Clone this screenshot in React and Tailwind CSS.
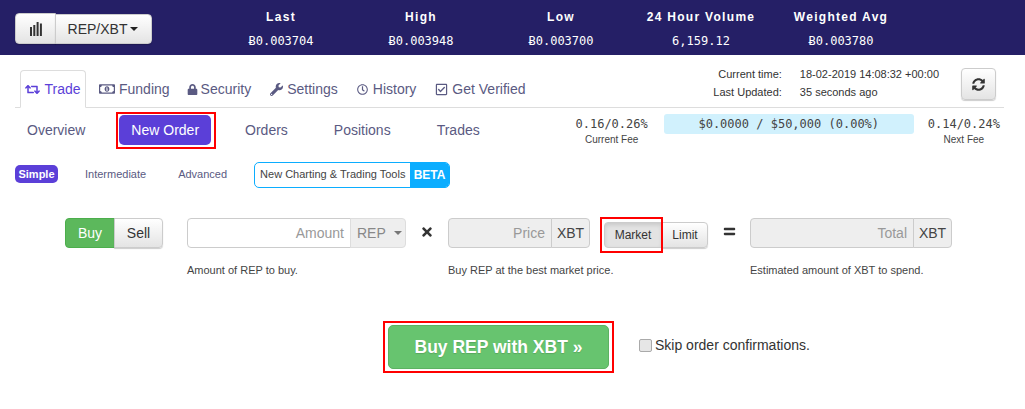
import React from "react";
import { FaRetweet, FaRegMoneyBillAlt, FaLock, FaWrench, FaRegClock, FaRegCheckSquare, FaSyncAlt, FaTimes, FaEquals } from "react-icons/fa";

const sans = "font-['Liberation_Sans',Arial,sans-serif]";
const mono = "font-['DejaVu_Sans_Mono',monospace]";
const btn = "bg-gradient-to-b from-white to-[#e4e4e4] border border-[#ccc] shadow-[0_1px_1px_rgba(0,0,0,0.2)]";

const stats = [
  ["Last", "Ƀ0.003704"],
  ["High", "Ƀ0.003948"],
  ["Low", "Ƀ0.003700"],
  ["24 Hour Volume", "6,159.12"],
  ["Weighted Avg", "Ƀ0.003780"],
];

const tabs = [
  [FaRegMoneyBillAlt, "Funding", "text-[16px]", "mr-[4px]", "ml-0"],
  [FaLock, "Security", "text-[11px]", "mr-[3px]", "ml-[17px]"],
  [FaWrench, "Settings", "text-[13px]", "mr-[4px]", "ml-[19px]"],
  [FaRegClock, "History", "text-[11px]", "mr-[5px]", "ml-[19px]"],
  [FaRegCheckSquare, "Get Verified", "text-[13px]", "mr-[4px]", "ml-[19px]"],
];

function RedBox({ className }) {
  return <span className={"absolute border-2 border-[#f00] pointer-events-none " + className} />;
}

function Caret({ color }) {
  return <span className={"inline-block w-0 h-0 border-x-[4px] border-x-transparent border-t-[4px] " + color} />;
}

export default function App() {
  return (
    <div className={sans + " w-[1025px] h-[409px] bg-white text-[#333] overflow-hidden"}>
      <header className="h-[55px] bg-[#251f66] flex items-center pl-[15px]">
        <div className="flex h-[31px] w-[137px] mt-[2px] text-[#333]">
          <div className={btn + " w-[41px] rounded-l-[4px] flex items-center justify-center"}>
            <svg width="12" height="14" viewBox="0 0 12 14" fill="#333">
              <rect x="0" y="5" width="2" height="9" />
              <rect x="3.3" y="3" width="2" height="11" />
              <rect x="6.6" y="0" width="2" height="14" />
              <rect x="9.9" y="1.5" width="2" height="12.5" />
            </svg>
          </div>
          <div className={btn + " flex-1 -ml-px rounded-r-[4px] flex items-center justify-center gap-[3px] text-[14px] mt-px pr-[1px]"}>
            REP/XBT <Caret color="border-t-[#222]" />
          </div>
        </div>
        <div className="ml-[59px] mt-[3px] flex">
          {stats.map(([k, v]) => (
            <div key={k} className="w-[140px] text-center text-white">
              <div className="text-[12px] leading-[14px] font-bold tracking-[1.3px]">{k}</div>
              <div className={mono + " text-[12px] leading-[14px] mt-[10px]"}>{v}</div>
            </div>
          ))}
        </div>
      </header>

      <div className="mx-[15px] w-[989px] h-[53px] border-b border-[#ddd] flex items-end relative text-[14px] text-[#5a5a82]">
        <div className="flex items-end pl-[5px] -mb-px">
          <div className="h-[38px] w-[66px] border border-b-white border-[#ddd] rounded-t-[4px] flex items-center justify-center gap-[4px] text-[#5b3fd8] bg-white">
            <FaRetweet className="text-[15px]" /> Trade
          </div>
          <div className="flex h-[38px] items-center ml-[13px]">
            {tabs.map(([I, t, s, m, l]) => (
              <div key={t} className={"flex items-center whitespace-nowrap " + l}>
                <I className={s + " " + m} />
                {t}
              </div>
            ))}
          </div>
        </div>
        <div className="ml-auto mr-[8px] self-start flex mt-[13px]">
          <div className="text-[11px] leading-[18px] text-[#333] flex gap-[18px] -mt-[3px]">
            <div className="text-right">
              <div>Current time:</div>
              <div>Last Updated:</div>
            </div>
            <div>
              <div>18-02-2019 14:08:32 +00:00</div>
              <div>35 seconds ago</div>
            </div>
          </div>
          <div className={btn + " ml-[22px] w-[35px] h-[32px] rounded-[4px] flex items-center justify-center text-[#333]"}>
            <FaSyncAlt className="text-[13px]" />
          </div>
        </div>
      </div>

      <div className="h-[57px] pl-[15px] flex text-[14px] text-[#5a5a82]">
        <nav className="flex gap-[22px] pt-[7px] items-start">
          <div className="px-3 h-[30px] leading-[30px]">Overview</div>
          <div className="relative px-3 h-[30px] leading-[30px] rounded-[5px] bg-[#5b3fd8] text-white">
            New Order
            <RedBox className="-left-[3px] -right-[5px] -top-[3px] -bottom-[4px]" />
          </div>
          <div className="px-3 h-[30px] leading-[30px]">Orders</div>
          <div className="px-3 h-[30px] leading-[30px]">Positions</div>
          <div className="px-3 h-[30px] leading-[30px]">Trades</div>
        </nav>
        <div className="ml-auto mr-[25px] flex pt-[6px] items-start text-[#444]">
          <div className="text-center">
            <div className={mono + " text-[12px] leading-[20px]"}>0.16/0.26%</div>
            <div className="text-[10px] leading-[12px]">Current Fee</div>
          </div>
          <div className={mono + " ml-[16px] w-[250px] h-[20px] bg-[#d1f1fd] rounded-[3px] text-center text-[12px] leading-[20px]"}>
            $0.0000 / $50,000 (0.00%)
          </div>
          <div className="text-center ml-[14px]">
            <div className={mono + " text-[12px] leading-[20px]"}>0.14/0.24%</div>
            <div className="text-[10px] leading-[12px]">Next Fee</div>
          </div>
        </div>
      </div>

      <div className="h-[26px] mt-[-1px] pl-[15px] flex items-center text-[11px] text-[#5a5a82]">
        <div className="h-[18px] w-[43px] -mt-[6px] rounded-[5px] bg-[#5b3fd8] text-white font-bold text-center leading-[18px]">Simple</div>
        <div className="ml-[27px] -mt-[6px]">Intermediate</div>
        <div className="ml-[32px] -mt-[6px]">Advanced</div>
        <div className="ml-[27px] -mt-[4px] h-[26px] w-[196px] border border-[#0badff] rounded-[5px] flex items-stretch overflow-hidden text-[#444]">
          <span className="pl-[5px] leading-[22px] whitespace-nowrap flex-1">New Charting &amp; Trading Tools</span>
          <span className="w-[39px] bg-[#0badff] text-white font-bold text-[12px] leading-[24px] text-center">BETA</span>
        </div>
      </div>

      <div className="mt-[28px] pl-[65px] flex items-start text-[14px]">
        <div className="w-[122px] flex h-[30px]">
          <div className="w-[50px] rounded-l-[4px] bg-[#5cb85c] border border-[#4cae4c] text-white text-center leading-[28px]">Buy</div>
          <div className={btn + " w-[49px] -ml-px rounded-r-[4px] text-center leading-[28px]"}>Sell</div>
        </div>

        <div className="w-[219px]">
          <div className="flex h-[30px]">
            <div className="w-[164px] border border-[#ccc] rounded-l-[4px] text-right pr-[6px] leading-[28px] text-[#999] bg-white">Amount</div>
            <div className="flex-1 -ml-px border border-[#ddd] rounded-r-[4px] bg-[#eee] text-[#888] flex items-center pl-[6px] gap-[8px]">
              REP <Caret color="border-t-[#777]" />
            </div>
          </div>
          <div className="mt-[14px] text-[11px] leading-[16px] text-[#444] whitespace-nowrap">Amount of REP to buy.</div>
        </div>

        <div className="w-[42px] h-[30px] flex items-center justify-center">
          <FaTimes className="text-[14px] text-[#333] -mt-[2px]" />
        </div>

        <div className="w-[142px] flex-none">
          <div className="flex h-[30px]">
            <div className="flex-1 border border-[#ccc] rounded-l-[4px] text-right pr-[6px] leading-[28px] text-[#999] bg-[#eee]">Price</div>
            <div className="w-[39px] -ml-px border border-[#ccc] rounded-r-[4px] bg-[#eee] text-[#444] text-center leading-[28px]">XBT</div>
          </div>
          <div className="mt-[14px] text-[11px] leading-[16px] text-[#444] whitespace-nowrap">Buy REP at the best market price.</div>
        </div>

        <div className="ml-[14px] w-[104px] h-[26px] mt-[4px] flex text-[12px]">
          <div className="relative w-[59px] rounded-l-[4px] bg-[#e3e3e3] border border-[#ccc] shadow-[inset_0_2px_4px_rgba(0,0,0,0.12)] text-center leading-[24px] pr-[1px]">
            Market
            <RedBox className="-left-[5px] -right-[1px] -top-[6px] -bottom-[6px]" />
          </div>
          <div className={btn + " flex-1 -ml-px rounded-r-[4px] text-center leading-[24px]"}>Limit</div>
        </div>

        <div className="w-[42px] h-[30px] flex items-center justify-center">
          <FaEquals className="text-[13px] text-[#333] -mt-[4px]" />
        </div>

        <div className="w-[202px] flex-none">
          <div className="flex h-[30px]">
            <div className="flex-1 border border-[#ccc] rounded-l-[4px] text-right pr-[6px] leading-[28px] text-[#999] bg-[#eee]">Total</div>
            <div className="w-[39px] -ml-px border border-[#ccc] rounded-r-[4px] bg-[#eee] text-[#444] text-center leading-[28px]">XBT</div>
          </div>
          <div className="mt-[14px] text-[11px] leading-[16px] text-[#444] whitespace-nowrap">Estimated amount of XBT to spend.</div>
        </div>
      </div>

      <div className="mt-[47px] pl-[388px] flex items-start">
        <div className="relative w-[221px] h-[44px] rounded-[5px] bg-[#67c46f] border border-[#5cb262] text-white font-bold text-[17.5px] text-center leading-[42px] [text-shadow:0_1px_1px_rgba(0,0,0,0.15)]">
          Buy REP with XBT »
          <RedBox className="-left-[6px] -right-[6px] -top-[5px] -bottom-[5px]" />
        </div>
        <label className="ml-[30px] mt-[12px] flex items-center text-[14px] text-[#333] leading-[16px]">
          <input type="checkbox" className="appearance-none w-[13px] h-[13px] mr-[3px] m-0 bg-[#e6e6e6] border border-[#aaa] rounded-[2px]" readOnly />
          Skip order confirmations.
        </label>
      </div>
    </div>
  );
}
